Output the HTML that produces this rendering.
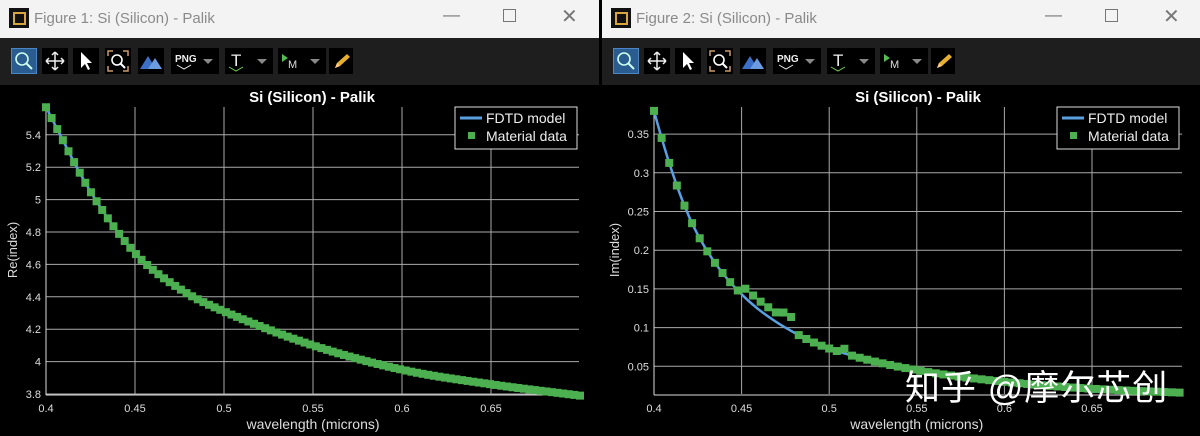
<!DOCTYPE html><html><head><meta charset="utf-8"><style>
body{margin:0;width:1200px;height:436px;background:#000;overflow:hidden;font-family:"Liberation Sans",sans-serif;position:relative}
.win{position:absolute;top:0;height:436px;background:#000}
.tb{position:absolute;left:0;right:0;top:0;height:38px;background:#f3f3f3}
.tb .t{position:absolute;left:34px;top:10px;font-size:15px;color:#8a8a8a}
.tb .ic{position:absolute;left:9px;top:8px;width:20px;height:20px;background:#111}
.tb .ic:after{content:"";position:absolute;left:4px;top:4px;width:9px;height:9px;border:2px solid #d7a640}
.ctl{position:absolute;top:7px;font-size:17px;color:#777}
.bar{position:absolute;left:0;right:0;top:38px;height:47px;background:#1e1e1e}
.btn{position:absolute;top:10px;height:26px;background:#000}
.sel{background:#2b5c8f;border:1px solid #4a86c5;box-sizing:border-box}
.dd{position:absolute;top:21px;width:0;height:0;border-left:5px solid transparent;border-right:5px solid transparent;border-top:5px solid #888}
svg text{font-family:"Liberation Sans",sans-serif}
</style></head><body>
<div class="win" style="left:0;width:599px" id="w1"></div>
<div class="win" style="left:602px;width:598px" id="w2"></div>
<script>
function mk(id,n){
var w=document.getElementById(id);
var h='<div class="tb"><div class="ic"></div><div class="t">Figure '+n+': Si (Silicon) - Palik</div>'+
'<div class="ctl" style="left:443px;top:5px">&#8212;</div><div class="ctl" style="left:503px;top:9px;width:11px;height:11px;border:1px solid #777"></div><div class="ctl" style="left:561px;top:4px;font-size:20px">&#10005;</div></div>';
h+='<div class="bar">';
var icons=['<svg width="24" height="24"><circle cx="10" cy="10" r="6" stroke="#cfe" stroke-width="1.6" fill="none"/><line x1="14" y1="14" x2="20" y2="20" stroke="#cfe" stroke-width="2"/></svg>',
'<svg width="26" height="26"><path d="M13 4v18M4 13h18M13 4l-3 3M13 4l3 3M13 22l-3-3M13 22l3-3M4 13l3-3M4 13l3 3M22 13l-3-3M22 13l-3 3" stroke="#eee" stroke-width="1.5" fill="none"/></svg>',
'<svg width="26" height="26"><path d="M8 4l0 16 4-4 3 6 2-1-3-6 5 0z" fill="#fff"/></svg>',
'<svg width="26" height="26"><path d="M3 8V3h5M18 3h5v5M3 18v5h5M23 18v5h-5" stroke="#c96" stroke-width="1.5" fill="none"/><circle cx="12" cy="12" r="5" stroke="#fff" stroke-width="1.6" fill="none"/><line x1="15" y1="15" x2="20" y2="20" stroke="#fff" stroke-width="2"/></svg>',
'<svg width="26" height="26"><path d="M2 21l8-13 8 13z" fill="#3b6fc8"/><path d="M10 21l7-11 7 11z" fill="#6b9be0"/></svg>',
'<svg width="50" height="26"><text x="4" y="14" font-size="10" fill="#eee" font-weight="bold">PNG</text><path d="M6 17l7 4 7-4" stroke="#eee" fill="none"/></svg>',
'<svg width="50" height="26"><text x="6" y="18" font-size="17" fill="#eee">T</text><path d="M4 19l7 4 7-4" stroke="#7c5" fill="none"/></svg>',
'<svg width="50" height="26"><path d="M4 6l6 4-6 4z" fill="#5b5"/><text x="10" y="20" font-size="11" fill="#ddd" font-family="Liberation Serif">M</text></svg>'];
var L=[11,42,73,105,138,171,225,278],W=[26,26,26,26,26,48,48,48];
for(var i=0;i<8;i++){h+='<div class="btn'+(i==0?' sel':'')+'" style="left:'+L[i]+'px;width:'+W[i]+'px">'+icons[i]+'</div>';if(i>=5)h+='<div class="dd" style="left:'+(L[i]+32)+'px"></div>';}
h+='<div class="btn" style="left:329px;width:24px"><svg width="24" height="26"><path d="M6 20l2-5 10-9 3 3-10 9z" fill="#e8b030"/><path d="M6 20l2-5 3 3z" fill="#fc8"/></svg></div>';
h+='</div>';
h+='<div style="position:absolute;left:2px;right:0;top:85px;bottom:2px;background:#000"></div>';
w.innerHTML=h;}
mk('w1',1);mk('w2',2);
function spline(pts,x){for(var i=0;i<pts.length-1;i++){if(x<=pts[i+1][0]){var a=pts[i],b=pts[i+1],t=(x-a[0])/(b[0]-a[0]);var p0=pts[Math.max(0,i-1)],p3=pts[Math.min(pts.length-1,i+2)];var h=b[0]-a[0];var m1=(b[1]-p0[1])/(b[0]-p0[0])*h,m2=(p3[1]-a[1])/(p3[0]-a[0])*h;var t2=t*t,t3=t2*t;return (2*t3-3*t2+1)*a[1]+(t3-2*t2+t)*m1+(-2*t3+3*t2)*b[1]+(t3-t2)*m2;}}return pts[pts.length-1][1];}
function plot(id,o){
var F=o.log?function(l){return Math.exp(spline(o.pts,l))}:function(l){return spline(o.pts,l)};
var s='<svg width="598" height="436" style="position:absolute;left:0;top:0">';
s+='<text x="'+o.tx+'" y="102" font-size="15" font-weight="bold" fill="#fff" text-anchor="middle">Si (Silicon) - Palik</text>';
var X=function(l){return o.x0+(l-0.4)/0.05*o.dx},Y=function(v){return o.y0-(v-o.v0)/o.dv*o.dy};
for(var k=0;k<6;k++){var xx=X(0.4+0.05*k);s+='<line x1="'+xx+'" y1="107" x2="'+xx+'" y2="394" stroke="#aaa" stroke-width="1"/>';s+='<text x="'+xx+'" y="412" font-size="11" fill="#ddd" text-anchor="middle">'+['0.4','0.45','0.5','0.55','0.6','0.65'][k]+'</text>';}
o.yt.forEach(function(v){var yy=Y(v[0]);s+='<line x1="'+o.x0+'" y1="'+yy+'" x2="'+o.xe+'" y2="'+yy+'" stroke="#aaa"/><text x="'+(o.x0-5)+'" y="'+(yy+4)+'" font-size="11" fill="#ddd" text-anchor="end">'+v[1]+'</text>';});
s+='<line x1="'+o.x0+'" y1="395" x2="'+o.xe+'" y2="395" stroke="#ddd"/><line x1="'+o.x0+'" y1="107" x2="'+o.x0+'" y2="395" stroke="#ddd"/>';
var d='';for(var l=0.4;l<=0.7;l+=0.002){d+=(d?'L':'M')+X(l).toFixed(1)+' '+Y(F(l)).toFixed(1);}
s+='<path d="'+d+'" stroke="#5aa0e0" stroke-width="2.5" fill="none"/>';
for(var i=0;i<o.n;i++){var l=0.4+0.3*i/(o.n-1);var v=F(l)+(o.noise?o.noise(l):0);s+='<rect x="'+(X(l)-4)+'" y="'+(Y(v)-4)+'" width="8" height="8" fill="#4caf50"/>';}
s+='<text x="'+(o.x0+o.dx*3)+'" y="429" font-size="14" fill="#ddd" text-anchor="middle">wavelength (microns)</text>';
s+='<text transform="translate(17,250) rotate(-90)" font-size="13" fill="#ddd" text-anchor="middle">'+o.yl+'</text>';
s+='<rect x="455" y="107" width="122" height="42" fill="#000" stroke="#ddd"/><line x1="460" y1="118" x2="482" y2="118" stroke="#5aa0e0" stroke-width="3"/><rect x="468" y="132" width="7" height="7" fill="#4caf50"/>';
s+='<text x="486" y="123" font-size="14" fill="#eee">FDTD model</text><text x="486" y="141" font-size="14" fill="#eee">Material data</text>';
s+='</svg>';document.getElementById(id).insertAdjacentHTML('beforeend',s);}
plot('w1',{tx:312,x0:46,dx:89,xe:579,y0:394,v0:3.8,dv:0.2,dy:32.4,n:96,yl:'Re(index)',
yt:[[3.8,'3.8'],[4,'4'],[4.2,'4.2'],[4.4,'4.4'],[4.6,'4.6'],[4.8,'4.8'],[5,'5'],[5.2,'5.2'],[5.4,'5.4']],
pts:[[0.4,5.57],[0.425,5.05],[0.45,4.67],[0.475,4.45],[0.5,4.31],[0.55,4.1],[0.6,3.95],[0.65,3.86],[0.7,3.79]]});
plot('w2',{tx:316,x0:52,dx:87.6,xe:580,y0:405,v0:0,dv:0.05,dy:38.7,n:70,yl:'Im(index)',log:true,
yt:[[0.05,'0.05'],[0.1,'0.1'],[0.15,'0.15'],[0.2,'0.2'],[0.25,'0.25'],[0.3,'0.3'],[0.35,'0.35']],
pts:[[0.4,Math.log(0.38)],[0.425,Math.log(0.22)],[0.45,Math.log(0.143)],[0.475,Math.log(0.1)],[0.5,Math.log(0.073)],[0.55,Math.log(0.045)],[0.6,Math.log(0.03)],[0.65,Math.log(0.021)],[0.7,Math.log(0.016)]],
noise:function(l){if(l>0.452&&l<0.47)return 0.012;if(l>0.47&&l<0.48)return 0.018;if(l>0.505&&l<0.512)return 0.006;return 0;}});
</script>
<div style="position:absolute;left:905px;top:360px;font-size:35px;color:#fff;font-family:'Liberation Sans','Noto Sans CJK SC',sans-serif;letter-spacing:1px">知乎 @摩尔芯创</div>
</body></html>
